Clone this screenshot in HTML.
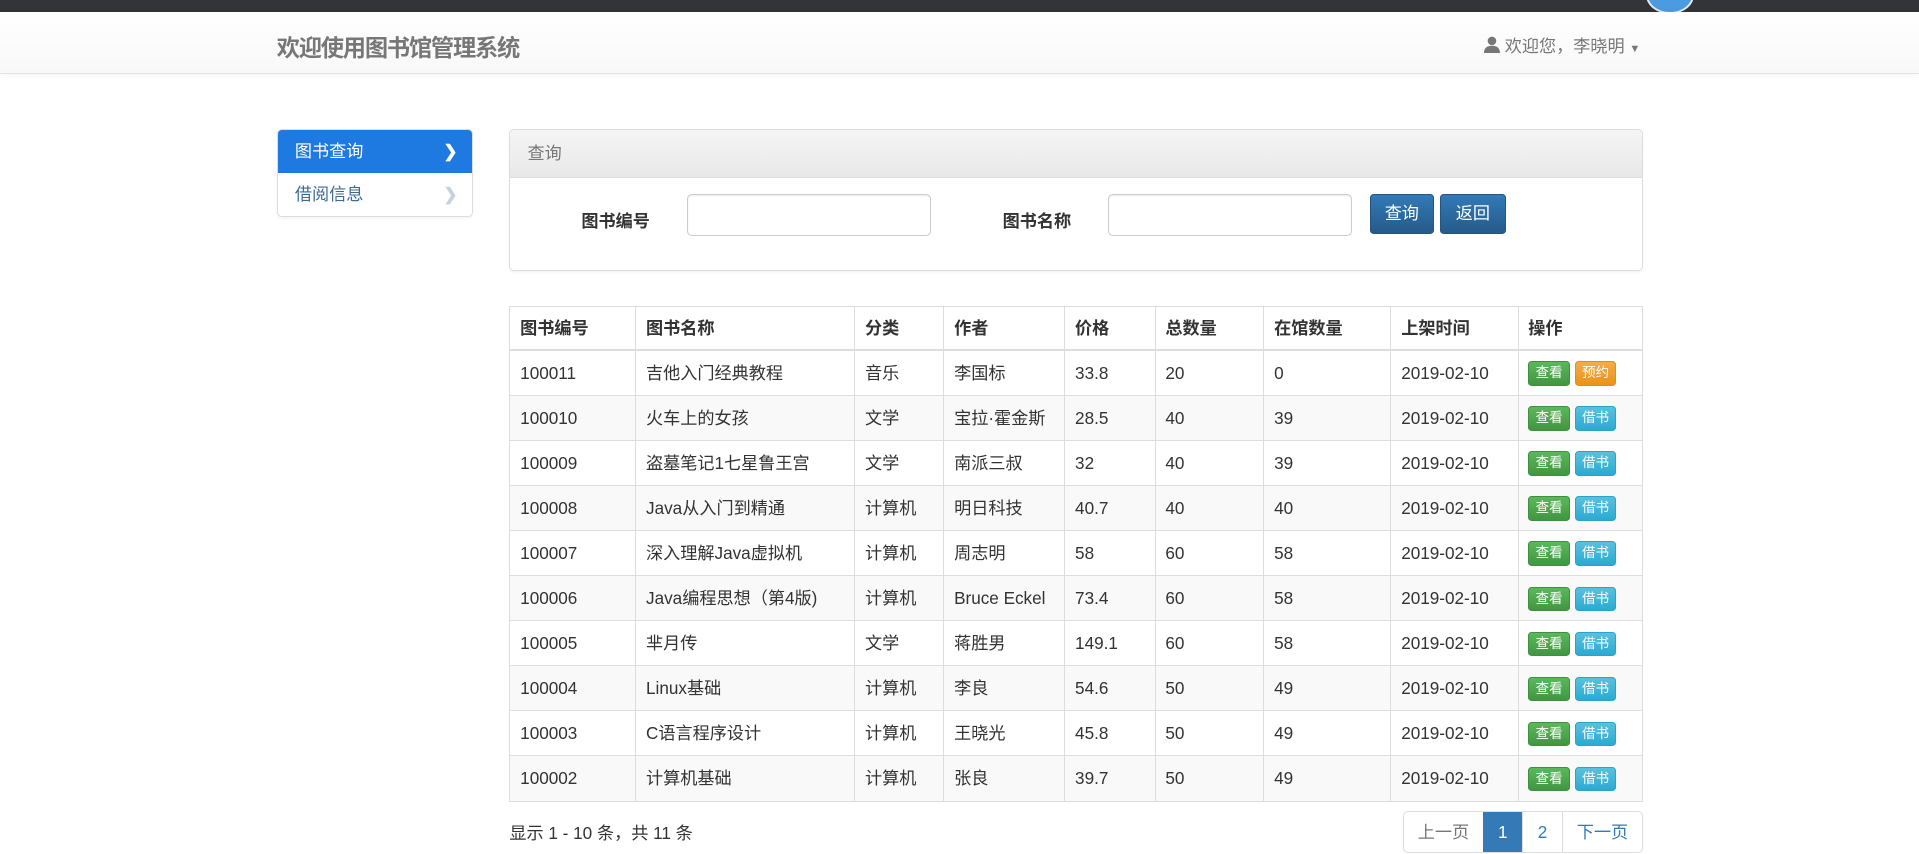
<!DOCTYPE html>
<html><head><meta charset="utf-8">
<style>
html,body{margin:0;padding:0;background:#fff;overflow:hidden;width:1919px;height:854px}
#w{zoom:1.2245;width:1568px;height:698px;position:relative;font-family:"Liberation Sans","Noto Sans CJK SC",sans-serif;font-size:14px;color:#333}
.top{position:absolute;left:0;top:0;width:1568px;height:10px;background:#333438}
.circ{position:absolute;left:1344px;top:-20px;width:36px;height:28px;border-radius:50%;background:#4a9be0;border:2px solid #dfe8f5}
.nav{position:absolute;left:0;top:10px;width:1568px;height:50px;background:linear-gradient(#fff,#f8f8f8);border-bottom:1px solid #e4e4e4;box-shadow:0 1px 6px rgba(0,0,0,.06)}
.brand{position:absolute;left:226px;top:14px;font-size:19px;font-weight:bold;color:#777;letter-spacing:-1px}
.user{position:absolute;left:1212px;top:16px;color:#777;font-size:14px}
.side{position:absolute;left:226px;top:105px;width:159px;border:1px solid #ddd;border-radius:4px;overflow:hidden;box-shadow:0 1px 2px rgba(0,0,0,.05)}
.side div{height:35px;line-height:35px;padding-left:14px;position:relative}
.side .a{background:#1e7ae0;color:#fff;border-bottom:1px solid #1e7ae0}
.side .b{color:#3d6b96;background:#fff}
.chev{position:absolute;right:12px;top:0;font-weight:bold;font-size:14px}
.panel{position:absolute;left:416px;top:105px;width:924px;height:115px;border:1px solid #ddd;border-radius:4px;box-shadow:0 1px 2px rgba(0,0,0,.05);overflow:hidden}
.ph{height:39px;line-height:39px;padding-left:14px;background:linear-gradient(#f5f5f5,#e8e8e8);border-bottom:1px solid #ddd;color:#777}
.lbl{position:absolute;top:63px;font-weight:bold}
.inp{position:absolute;top:53px;width:198px;height:32px;border:1px solid #ccc;border-radius:4px;box-shadow:inset 0 1px 1px rgba(0,0,0,.075)}
.btn{position:absolute;top:53px;height:32px;line-height:30px;width:52px;text-align:center;color:#fff;border-radius:3px;background:linear-gradient(#337ab7,#265a88);border:1px solid #245580;box-sizing:border-box}
table{position:absolute;left:416px;top:250px;width:926px;border-collapse:collapse}
td,th{border:1px solid #ddd;padding:0 8px;height:36px;line-height:20px;text-align:left;white-space:nowrap;vertical-align:middle}
td *{vertical-align:middle}
th{border-bottom:2px solid #ddd;height:34px}
tr:nth-child(odd) td{background:#f9f9f9}
.sb{display:inline-block;font-size:11px;color:#fff;width:34px;height:20px;line-height:18px;text-align:center;border-radius:3px;vertical-align:middle}
.g{background:linear-gradient(#5cb85c,#419641);border:1px solid #3e8f3e;box-sizing:border-box}
.c{background:linear-gradient(#5bc0de,#2aabd2);border:1px solid #28a4c9;box-sizing:border-box;margin-left:4px}
.o{background:linear-gradient(#f0ad4e,#eb9316);border:1px solid #e38d13;box-sizing:border-box;margin-left:4px}
.info{position:absolute;left:416px;top:669px}
.pg{position:absolute;left:1146px;top:662px;height:33px;display:flex;border:1px solid #ddd;border-radius:4px;overflow:hidden}
.pg span{line-height:33px;text-align:center;border-left:1px solid #ddd;color:#337ab7;box-sizing:border-box}
.pg span:first-child{border-left:0;color:#777}
.pg .ac{background:#337ab7;color:#fff;border-color:#337ab7}
</style></head><body><div id="w">
<div class="top"></div><div class="circ"></div>
<div class="nav"><div class="brand">欢迎使用图书馆管理系统</div>
<div class="user"><svg width="13" height="14" viewBox="0 0 13 14" style="vertical-align:-1px"><circle cx="6.5" cy="4" r="3.5" fill="#777"/><path d="M0 14 Q0 8 6.5 8 Q13 8 13 14Z" fill="#777"/></svg> 欢迎您，李晓明 <span style="font-size:9px">▼</span></div></div>
<div class="side"><div class="a">图书查询<span class="chev">❯</span></div><div class="b">借阅信息<span class="chev" style="color:#c5d3e0">❯</span></div></div>
<div class="panel"><div class="ph">查询</div>
<span class="lbl" style="left:58px">图书编号</span><div class="inp" style="left:144px"></div>
<span class="lbl" style="left:402px">图书名称</span><div class="inp" style="left:488px"></div>
<div class="btn" style="left:702px">查询</div><div class="btn" style="left:759px;width:54px">返回</div></div>
<table>
<tr><th style="width:86px">图书编号</th><th style="width:162px">图书名称</th><th style="width:56px">分类</th><th style="width:82px">作者</th><th style="width:57px">价格</th><th style="width:72px">总数量</th><th style="width:87px">在馆数量</th><th style="width:87px">上架时间</th><th>操作</th></tr>
<tr><td>100011</td><td>吉他入门经典教程</td><td>音乐</td><td>李国标</td><td>33.8</td><td>20</td><td>0</td><td>2019-02-10</td><td><span class="sb g">查看</span><span class="sb o">预约</span></td></tr>
<tr><td>100010</td><td>火车上的女孩</td><td>文学</td><td>宝拉·霍金斯</td><td>28.5</td><td>40</td><td>39</td><td>2019-02-10</td><td><span class="sb g">查看</span><span class="sb c">借书</span></td></tr>
<tr><td>100009</td><td>盗墓笔记1七星鲁王宫</td><td>文学</td><td>南派三叔</td><td>32</td><td>40</td><td>39</td><td>2019-02-10</td><td><span class="sb g">查看</span><span class="sb c">借书</span></td></tr>
<tr><td>100008</td><td>Java从入门到精通</td><td>计算机</td><td>明日科技</td><td>40.7</td><td>40</td><td>40</td><td>2019-02-10</td><td><span class="sb g">查看</span><span class="sb c">借书</span></td></tr>
<tr><td>100007</td><td>深入理解Java虚拟机</td><td>计算机</td><td>周志明</td><td>58</td><td>60</td><td>58</td><td>2019-02-10</td><td><span class="sb g">查看</span><span class="sb c">借书</span></td></tr>
<tr><td>100006</td><td>Java编程思想（第4版)</td><td>计算机</td><td>Bruce Eckel</td><td>73.4</td><td>60</td><td>58</td><td>2019-02-10</td><td><span class="sb g">查看</span><span class="sb c">借书</span></td></tr>
<tr><td>100005</td><td>芈月传</td><td>文学</td><td>蒋胜男</td><td>149.1</td><td>60</td><td>58</td><td>2019-02-10</td><td><span class="sb g">查看</span><span class="sb c">借书</span></td></tr>
<tr><td>100004</td><td>Linux基础</td><td>计算机</td><td>李良</td><td>54.6</td><td>50</td><td>49</td><td>2019-02-10</td><td><span class="sb g">查看</span><span class="sb c">借书</span></td></tr>
<tr><td>100003</td><td>C语言程序设计</td><td>计算机</td><td>王晓光</td><td>45.8</td><td>50</td><td>49</td><td>2019-02-10</td><td><span class="sb g">查看</span><span class="sb c">借书</span></td></tr>
<tr><td>100002</td><td>计算机基础</td><td>计算机</td><td>张良</td><td>39.7</td><td>50</td><td>49</td><td>2019-02-10</td><td><span class="sb g">查看</span><span class="sb c">借书</span></td></tr>
</table>
<div class="info">显示 1 - 10 条，共 11 条</div>
<div class="pg"><span style="width:64px">上一页</span><span class="ac" style="width:32px">1</span><span style="width:33px">2</span><span style="width:65px">下一页</span></div>
</div></body></html>
